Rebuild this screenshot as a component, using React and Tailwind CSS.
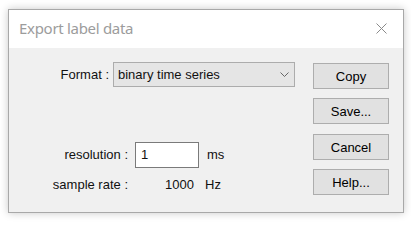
import React from "react";

const sans = { fontFamily: '"Liberation Sans", Arial, sans-serif' };

function Btn({ children, className = "" }) {
  return (
    <div
      className={`h-[26px] w-[76px] flex items-center justify-center bg-[#e1e1e1] border border-[#adadad] text-[13px] text-black leading-none ${className}`}
    >
      {children}
    </div>
  );
}

export default function App() {
  return (
    <div className="w-[411px] h-[225px] bg-white pl-[8px] pt-[9px]" style={sans}>
      <div className="w-[396px] h-[204px] border border-[#a8a8a8] shadow-[0_0_8px_rgba(0,0,0,0.22)] flex flex-col bg-[#f0f0f0]">
        <div className="h-[38px] bg-white flex items-center justify-between pl-[10px] pr-[16px] shrink-0">
          <span
            className="text-[15px] text-[#9c9c9c] leading-none -mt-[1px] tracking-[-0.3px]"
            style={{ fontFamily: '"Noto Sans", "Open Sans", sans-serif' }}
          >
            Export label data
          </span>
          <svg width="11" height="11" viewBox="0 0 11 11" className="-mt-[1px]">
            <path d="M0.5 0.5 L10.5 10.5 M10.5 0.5 L0.5 10.5" stroke="#8a8a8a" strokeWidth="1" fill="none" />
          </svg>
        </div>
        <div className="flex-1 flex">
          <div className="flex-1 flex flex-col text-[13px] text-[#111]">
            <div className="mt-[14px] h-[25px] flex items-center">
              <div className="w-[100px] text-right">Format :</div>
              <div className="ml-[4px] w-[182px] h-[25px] bg-[#e5e5e5] border border-[#acacac] flex items-center justify-between pl-[4px] pr-[5px]">
                <span>binary time series</span>
                <svg width="9" height="5" viewBox="0 0 9 5">
                  <path d="M0.5 0.5 L4.5 4.5 L8.5 0.5" stroke="#666" strokeWidth="1" fill="none" />
                </svg>
              </div>
            </div>
            <div className="mt-[55px] h-[26px] flex items-center">
              <div className="w-[119px] text-right">resolution :</div>
              <div className="ml-[7px] w-[64px] h-[26px] bg-white border border-[#7a7a7a] flex items-center pl-[5px]">
                1
              </div>
              <div className="ml-[8px]">ms</div>
            </div>
            <div className="mt-[9px] h-[16px] flex items-center">
              <div className="w-[119px] text-right">sample rate :</div>
              <div className="w-[66px] text-right">1000</div>
              <div className="ml-[11px]">Hz</div>
            </div>
          </div>
          <div className="w-[76px] mr-[14px] mt-[15px] flex flex-col">
            <Btn>Copy</Btn>
            <Btn className="mt-[9px]">Save...</Btn>
            <Btn className="mt-[10px]">Cancel</Btn>
            <Btn className="mt-[9px]">Help...</Btn>
          </div>
        </div>
      </div>
    </div>
  );
}
